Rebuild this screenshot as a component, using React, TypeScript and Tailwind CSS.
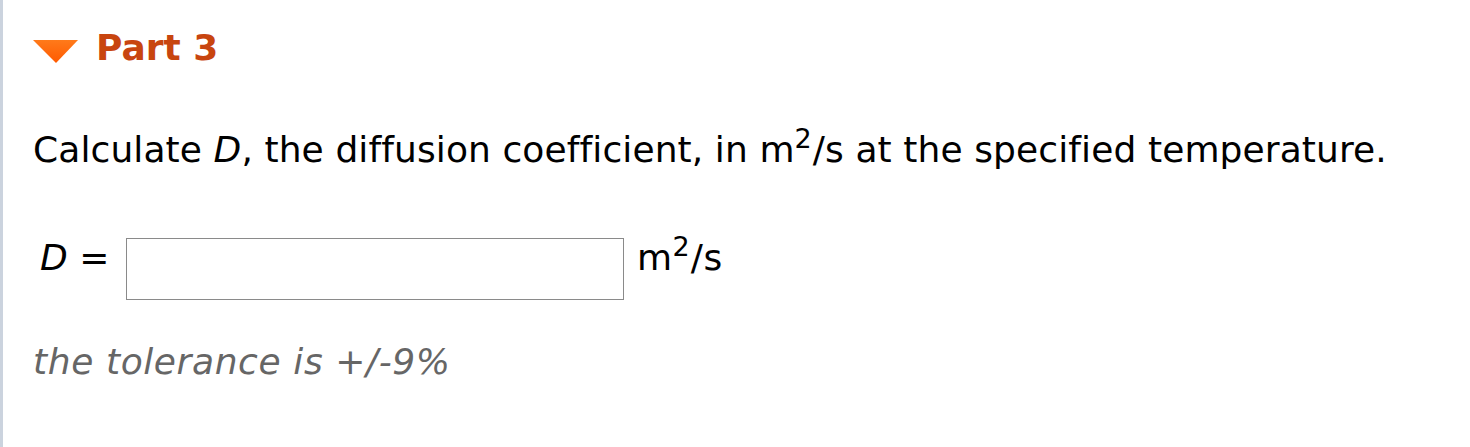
function Sup2() {
  return <span className="relative top-[-14px] text-[27px] leading-none tracking-[1px]">2</span>;
}

export default function App() {
  return (
    <div
      className="w-[1470px] h-[447px] bg-white border-l-[3px] border-[#cbd3de] overflow-hidden"
      style={{ fontFamily: '"DejaVu Sans", Verdana, sans-serif' }}
    >
      <div className="pl-[30px] pt-[28px]">
        <div className="flex items-center h-[40px]">
          <svg width="46" height="26" viewBox="0 0 46 26" className="mt-[6px]">
            <defs>
              <linearGradient id="tri" x1="0" y1="0" x2="0" y2="1">
                <stop offset="0" stopColor="#ff7a1a" />
                <stop offset="1" stopColor="#ff5a00" />
              </linearGradient>
            </defs>
            <polygon points="0,2 45,2 23,25" fill="url(#tri)" />
          </svg>
          <h2 className="ml-[17px] text-[36px] font-bold text-[#c8450f] leading-none">Part 3</h2>
        </div>

        <p className="mt-[64px] text-[36px] leading-none text-black tracking-[0.1px]">
          Calculate <i>D</i>, the diffusion coefficient, in m<Sup2 />/s at the specified temperature.
        </p>

        <div className="mt-[70px] flex items-start">
          <span className="ml-[7px] mt-[2px] w-[86px] text-[36px] leading-none text-black"><i>D</i> =</span>
          <input
            type="text"
            className="w-[498px] h-[62px] border border-[#8a8a8a] bg-white outline-none"
          />
          <span className="ml-[13px] mt-[2px] text-[36px] leading-none text-black tracking-[0.5px]">
            m<Sup2 />/s
          </span>
        </div>

        <p className="mt-[44px] text-[36px] italic text-[#666666] leading-none tracking-[0.6px]">
          the tolerance is +/-9%
        </p>
      </div>
    </div>
  );
}
